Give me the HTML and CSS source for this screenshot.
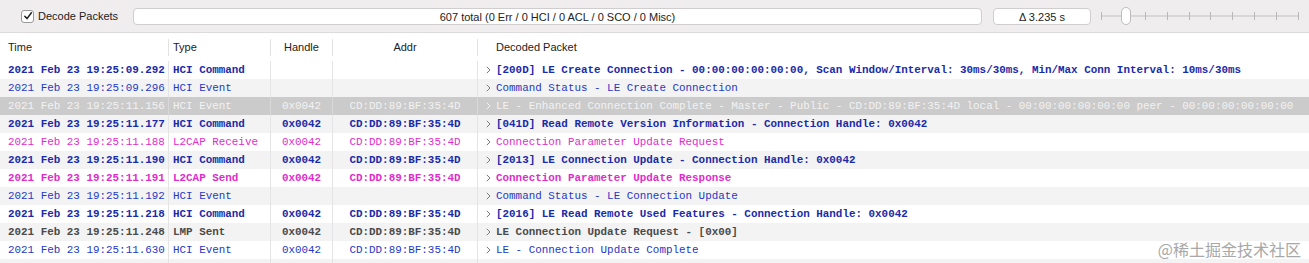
FILE: index.html
```html
<!DOCTYPE html>
<html lang="en">
<head>
    <meta charset="UTF-8">
    <title>Packet Log</title>
    <link rel="stylesheet" href="styles.css">
</head>
<body>
    <!-- Toolbar -->
    <div class="toolbar">
        <label class="decode">
            <span class="check">
                <svg width="10" height="10" viewBox="0 0 10 10"><path d="M1.8 5.2 L4 7.6 L8.4 1.8" fill="none" stroke="#222" stroke-width="1.5" stroke-linecap="round" stroke-linejoin="round"/></svg>
            </span>
            Decode Packets
        </label>
        <div class="field summary">607 total (0 Err / 0 HCI / 0 ACL / 0 SCO / 0 Misc)</div>
        <div class="field delta">&Delta; 3.235 s</div>
        <div class="slider">
            <div class="track"></div>
            <div class="ticks">
                <i></i><i></i><i></i><i></i><i></i><i></i><i></i><i></i><i></i><i></i>
            </div>
            <div class="knob"></div>
        </div>
    </div>

    <!-- Packet table -->
    <div class="table">
        <div class="head">
            <div class="c time">Time</div>
            <div class="c type">Type</div>
            <div class="c handle">Handle</div>
            <div class="c addr">Addr</div>
            <div class="c packet">Decoded Packet</div>
        </div>

        <div class="row cmd">
            <div class="c time">2021 Feb 23 19:25:09.292</div>
            <div class="c type">HCI Command</div>
            <div class="c handle"></div>
            <div class="c addr"></div>
            <div class="c packet"><svg class="chev" width="5" height="8" viewBox="0 0 5 8"><path d="M0.8 0.8 L4 4 L0.8 7.2" fill="none" stroke="currentColor" stroke-width="1"/></svg>[200D] LE Create Connection - 00:00:00:00:00:00, Scan Window/Interval: 30ms/30ms, Min/Max Conn Interval: 10ms/30ms</div>
        </div>
        <div class="row evt">
            <div class="c time">2021 Feb 23 19:25:09.296</div>
            <div class="c type">HCI Event</div>
            <div class="c handle"></div>
            <div class="c addr"></div>
            <div class="c packet"><svg class="chev" width="5" height="8" viewBox="0 0 5 8"><path d="M0.8 0.8 L4 4 L0.8 7.2" fill="none" stroke="currentColor" stroke-width="1"/></svg>Command Status - LE Create Connection</div>
        </div>
        <div class="row selected">
            <div class="c time">2021 Feb 23 19:25:11.156</div>
            <div class="c type">HCI Event</div>
            <div class="c handle">0x0042</div>
            <div class="c addr">CD:DD:89:BF:35:4D</div>
            <div class="c packet"><svg class="chev" width="5" height="8" viewBox="0 0 5 8"><path d="M0.8 0.8 L4 4 L0.8 7.2" fill="none" stroke="currentColor" stroke-width="1"/></svg>LE - Enhanced Connection Complete - Master - Public - CD:DD:89:BF:35:4D local - 00:00:00:00:00:00 peer - 00:00:00:00:00:00</div>
        </div>
        <div class="row cmd">
            <div class="c time">2021 Feb 23 19:25:11.177</div>
            <div class="c type">HCI Command</div>
            <div class="c handle">0x0042</div>
            <div class="c addr">CD:DD:89:BF:35:4D</div>
            <div class="c packet"><svg class="chev" width="5" height="8" viewBox="0 0 5 8"><path d="M0.8 0.8 L4 4 L0.8 7.2" fill="none" stroke="currentColor" stroke-width="1"/></svg>[041D] Read Remote Version Information - Connection Handle: 0x0042</div>
        </div>
        <div class="row l2recv">
            <div class="c time">2021 Feb 23 19:25:11.188</div>
            <div class="c type">L2CAP Receive</div>
            <div class="c handle">0x0042</div>
            <div class="c addr">CD:DD:89:BF:35:4D</div>
            <div class="c packet"><svg class="chev" width="5" height="8" viewBox="0 0 5 8"><path d="M0.8 0.8 L4 4 L0.8 7.2" fill="none" stroke="currentColor" stroke-width="1"/></svg>Connection Parameter Update Request</div>
        </div>
        <div class="row cmd">
            <div class="c time">2021 Feb 23 19:25:11.190</div>
            <div class="c type">HCI Command</div>
            <div class="c handle">0x0042</div>
            <div class="c addr">CD:DD:89:BF:35:4D</div>
            <div class="c packet"><svg class="chev" width="5" height="8" viewBox="0 0 5 8"><path d="M0.8 0.8 L4 4 L0.8 7.2" fill="none" stroke="currentColor" stroke-width="1"/></svg>[2013] LE Connection Update - Connection Handle: 0x0042</div>
        </div>
        <div class="row l2send">
            <div class="c time">2021 Feb 23 19:25:11.191</div>
            <div class="c type">L2CAP Send</div>
            <div class="c handle">0x0042</div>
            <div class="c addr">CD:DD:89:BF:35:4D</div>
            <div class="c packet"><svg class="chev" width="5" height="8" viewBox="0 0 5 8"><path d="M0.8 0.8 L4 4 L0.8 7.2" fill="none" stroke="currentColor" stroke-width="1"/></svg>Connection Parameter Update Response</div>
        </div>
        <div class="row evt">
            <div class="c time">2021 Feb 23 19:25:11.192</div>
            <div class="c type">HCI Event</div>
            <div class="c handle"></div>
            <div class="c addr"></div>
            <div class="c packet"><svg class="chev" width="5" height="8" viewBox="0 0 5 8"><path d="M0.8 0.8 L4 4 L0.8 7.2" fill="none" stroke="currentColor" stroke-width="1"/></svg>Command Status - LE Connection Update</div>
        </div>
        <div class="row cmd">
            <div class="c time">2021 Feb 23 19:25:11.218</div>
            <div class="c type">HCI Command</div>
            <div class="c handle">0x0042</div>
            <div class="c addr">CD:DD:89:BF:35:4D</div>
            <div class="c packet"><svg class="chev" width="5" height="8" viewBox="0 0 5 8"><path d="M0.8 0.8 L4 4 L0.8 7.2" fill="none" stroke="currentColor" stroke-width="1"/></svg>[2016] LE Read Remote Used Features - Connection Handle: 0x0042</div>
        </div>
        <div class="row lmp">
            <div class="c time">2021 Feb 23 19:25:11.248</div>
            <div class="c type">LMP Sent</div>
            <div class="c handle">0x0042</div>
            <div class="c addr">CD:DD:89:BF:35:4D</div>
            <div class="c packet"><svg class="chev" width="5" height="8" viewBox="0 0 5 8"><path d="M0.8 0.8 L4 4 L0.8 7.2" fill="none" stroke="currentColor" stroke-width="1"/></svg>LE Connection Update Request - [0x00]</div>
        </div>
        <div class="row evt">
            <div class="c time">2021 Feb 23 19:25:11.630</div>
            <div class="c type">HCI Event</div>
            <div class="c handle">0x0042</div>
            <div class="c addr">CD:DD:89:BF:35:4D</div>
            <div class="c packet"><svg class="chev" width="5" height="8" viewBox="0 0 5 8"><path d="M0.8 0.8 L4 4 L0.8 7.2" fill="none" stroke="currentColor" stroke-width="1"/></svg>LE - Connection Update Complete</div>
        </div>
        <div class="row evt">
            <div class="c time"></div>
            <div class="c type"></div>
            <div class="c handle"></div>
            <div class="c addr"></div>
            <div class="c packet"></div>
        </div>
    </div>

    <div class="watermark">@稀土掘金技术社区</div>
</body>
</html>
```

FILE: styles.css
```css
body {
    margin: 0;
    font-family: "Liberation Sans", Arial, sans-serif;
    background-color: white;
    overflow: hidden;
    height: 263px;
    position: relative;
}
.toolbar {
    height: 33px;
    background-color: #efeded;
    border-bottom: 1px solid #dcdada;
    display: flex;
    align-items: center;
    font-size: 11px;
    color: #222;
    box-sizing: border-box;
    padding-left: 21px;
}
.decode {
    display: flex;
    align-items: center;
    gap: 4px;
    width: 112px;
}
.check {
    width: 11px;
    height: 11px;
    border: 1px solid #9a9a9a;
    border-radius: 3px;
    background-color: white;
    display: flex;
    align-items: center;
    justify-content: center;
}
.field {
    height: 17px;
    background-color: white;
    border: 1px solid #cfcdcd;
    border-radius: 4px;
    box-sizing: border-box;
    display: flex;
    align-items: center;
    justify-content: center;
    font-size: 11px;
    margin-top: 1px;
}
.summary {
    width: 849px;
}
.delta {
    width: 98px;
    margin-left: 11px;
}
.slider {
    position: relative;
    width: 200px;
    height: 18px;
    margin-left: 9px;
}
.track {
    position: absolute;
    left: 1px;
    right: 1px;
    top: 8px;
    height: 2px;
    background-color: #d8d6d6;
}
.ticks {
    position: absolute;
    left: 1px;
    right: 1px;
    top: 5px;
    display: flex;
    justify-content: space-between;
}
.ticks i {
    width: 1px;
    height: 8px;
    background-color: #b8b6b6;
}
.knob {
    position: absolute;
    left: 21px;
    top: 0;
    width: 8px;
    height: 16px;
    background-color: white;
    border: 1px solid #bdbbbb;
    border-radius: 5px;
}
.table {
    font-size: 11px;
    height: 230px;
    overflow: hidden;
}
.head {
    display: flex;
    height: 28px;
    align-items: center;
    color: #222;
    padding-top: 1px;
    box-sizing: border-box;
}
.head .c {
    border-right: 1px solid #e2e2e2;
    height: 17px;
    line-height: 17px;
}
.head .packet {
    border-right: none;
}
.c {
    box-sizing: border-box;
    white-space: nowrap;
    overflow: hidden;
    flex-shrink: 0;
}
.time {
    width: 169px;
    padding-left: 8px;
}
.type {
    width: 102px;
    padding-left: 4px;
}
.handle {
    width: 62px;
    text-align: center;
}
.addr {
    width: 145px;
    text-align: center;
}
.packet {
    flex: 1;
    padding-left: 8px;
}
.head .packet {
    padding-left: 18px;
}
.row {
    display: flex;
    height: 18px;
    line-height: 18px;
    font-family: "Liberation Mono", "Courier New", monospace;
    font-size: 10.9px;
}
.row .c {
    border-right: 1px solid #e4e4e4;
}
.row .packet {
    border-right: none;
}
.row:nth-child(odd) {
    background-color: #f3f3f4;
}
.row:nth-child(even) {
    background-color: white;
}
.chev {
    color: #7a7a7a;
    margin-right: 5px;
    vertical-align: -1px;
}
.cmd {
    color: #1a2aa8;
    font-weight: bold;
}
.evt {
    color: #2438c4;
}
.l2recv {
    color: #e02ccc;
}
.l2send {
    color: #e02ccc;
    font-weight: bold;
}
.lmp {
    color: #4a4a4a;
    font-weight: bold;
}
.row.selected {
    background-color: #cbcbcb;
    color: #f2f2f2;
}
.selected .chev {
    color: #f2f2f2;
}
.selected .c {
    border-right-color: #d8d8d8;
}
.watermark {
    position: absolute;
    right: 8px;
    top: 237px;
    font-family: "Noto Sans CJK SC", sans-serif;
    font-size: 16px;
    color: #a8a8a8;
}
```
